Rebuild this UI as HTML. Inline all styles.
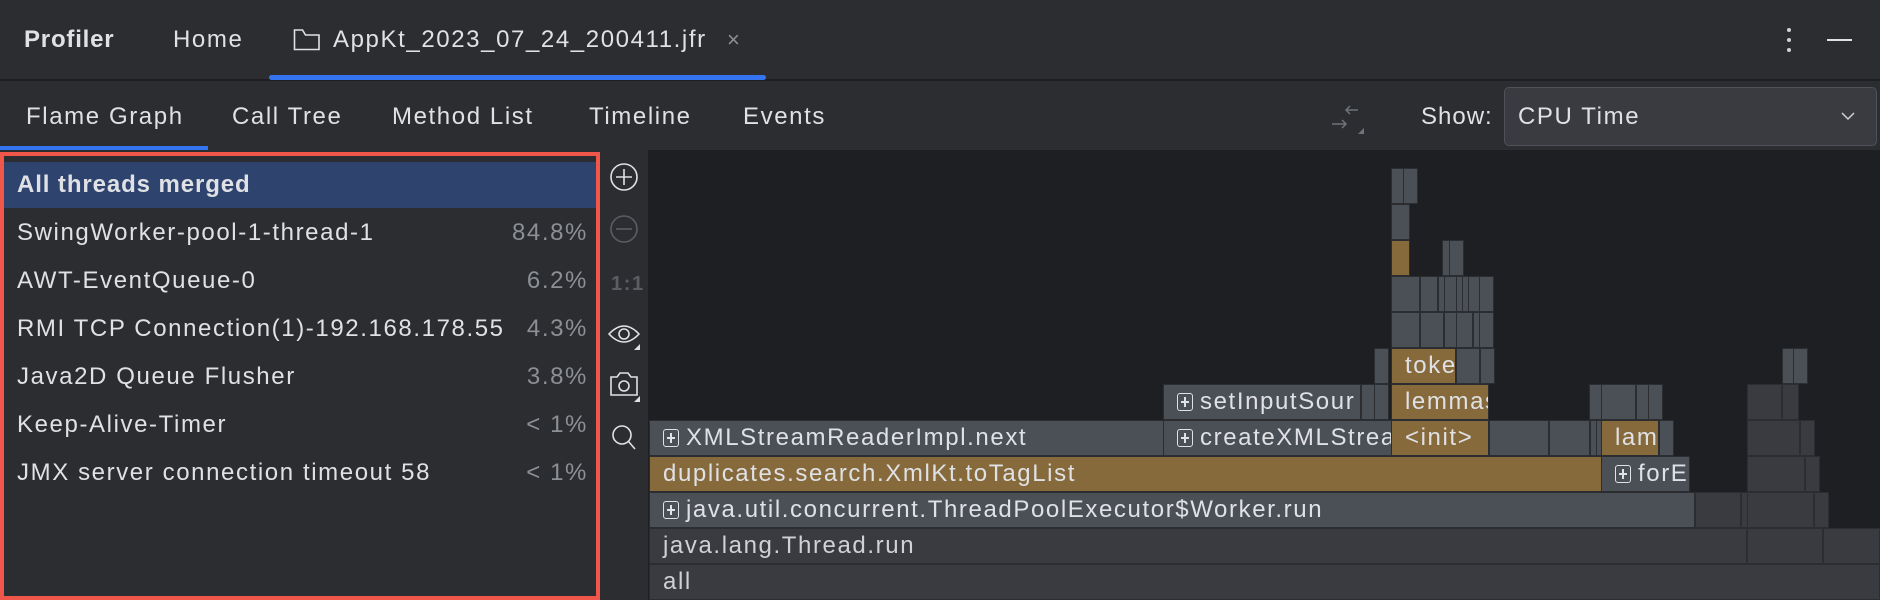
<!DOCTYPE html>
<html><head><meta charset="utf-8"><style>
*{box-sizing:border-box;margin:0;padding:0}
body{width:1880px;height:600px;background:#1e1f22;font-family:"Liberation Sans",sans-serif;color:#dfe1e5;position:relative;overflow:hidden;letter-spacing:1.6px}
.a{position:absolute}
.t{position:absolute;font-size:24px;line-height:26px;white-space:nowrap}
.b{position:absolute;border:1px solid #2b2d30;background:#4b4f56;height:36px;overflow:hidden;font-size:24px;line-height:34px;padding-left:13px;white-space:nowrap;color:#dfe1e5}
.o{background:#876a3b}
.d{background:#393b40}
.p{display:inline-block;width:16px;height:18px;border:1.5px solid #dfe1e5;border-radius:3px;position:relative;vertical-align:-2px;margin-right:7px}
.p:before{content:"";position:absolute;left:3px;right:3px;top:7px;height:1.5px;background:#dfe1e5}
.p:after{content:"";position:absolute;top:3px;bottom:3px;left:6px;width:1.5px;background:#dfe1e5}
.row{position:absolute;left:4px;width:590px;height:48px;font-size:24px;line-height:48px;padding-left:13px}
.row span{position:absolute;right:6px;color:#8c8f94}
</style></head><body>
<div class="a" style="left:0;top:0;width:1880px;height:80px;background:#2b2d30"></div>
<div class="a" style="left:0;top:79px;width:1880px;height:2px;background:#1e1f22"></div>
<div class="t" style="left:24px;top:27px;font-weight:bold;letter-spacing:0.8px">Profiler</div>
<div class="t" style="left:173px;top:27px">Home</div>
<svg class="a" style="left:293px;top:28px" width="28" height="24" viewBox="0 0 28 24"><path d="M1.5 3 V21.5 H26 V7 H12.5 L9.5 2 H1.5 Z" fill="none" stroke="#dfe1e5" stroke-width="1.6"/></svg>
<div class="t" style="left:333px;top:27px">AppKt_2023_07_24_200411.jfr</div>
<div class="t" style="left:727px;top:27px;color:#8c8f94;font-size:22px">×</div>
<div class="a" style="left:269px;top:75px;width:497px;height:5px;background:#3574f0;border-radius:3px"></div>
<div class="a" style="left:1787px;top:28px;width:4px;height:4px;border-radius:2px;background:#cfd1d5;box-shadow:0 10px 0 #cfd1d5,0 20px 0 #cfd1d5"></div>
<div class="a" style="left:1827px;top:39px;width:25px;height:2px;background:#dfe1e5"></div>

<div class="a" style="left:0;top:81px;width:1880px;height:69px;background:#2b2d30"></div>
<div class="t" style="left:26px;top:104px">Flame Graph</div>
<div class="t" style="left:232px;top:104px">Call Tree</div>
<div class="t" style="left:392px;top:104px">Method List</div>
<div class="t" style="left:589px;top:104px">Timeline</div>
<div class="t" style="left:743px;top:104px">Events</div>
<div class="a" style="left:0;top:146px;width:208px;height:4px;background:#3574f0"></div>
<svg class="a" style="left:1330px;top:100px" width="40" height="36" viewBox="0 0 40 36"><g stroke="#6f737a" stroke-width="1.5" fill="none"><path d="M28 10 H16 M20 6 L16 10 L20 14"/><path d="M2 24 H16 M12 20 L16 24 L12 28"/></g><path d="M34 28 L34 34 L28 34 Z" fill="#6f737a"/></svg>
<div class="t" style="left:1421px;top:104px;letter-spacing:1px">Show:</div>
<div class="a" style="left:1504px;top:87px;width:373px;height:59px;background:#393b40;border:1.5px solid #4e5157;border-radius:5px"></div>
<div class="t" style="left:1518px;top:104px">CPU Time</div>
<svg class="a" style="left:1840px;top:110px" width="16" height="12" viewBox="0 0 16 12"><path d="M2 3 L8 9 L14 3" fill="none" stroke="#cfd1d5" stroke-width="1.5"/></svg>

<div class="a" style="left:0;top:150px;width:600px;height:450px;background:#2b2d30"></div>
<div class="a" style="left:600px;top:150px;width:48px;height:450px;background:#2b2d30"></div>
<div class="a" style="left:4px;top:162px;width:592px;height:46px;background:#2e436e"></div>
<div class="row" style="top:161px;font-weight:bold;letter-spacing:0.9px">All threads merged</div>
<div class="row" style="top:209px">SwingWorker-pool-1-thread-1<span>84.8%</span></div>
<div class="row" style="top:257px">AWT-EventQueue-0<span>6.2%</span></div>
<div class="row" style="top:305px">RMI TCP Connection(1)-192.168.178.55<span>4.3%</span></div>
<div class="row" style="top:353px">Java2D Queue Flusher<span>3.8%</span></div>
<div class="row" style="top:401px">Keep-Alive-Timer<span>&lt; 1%</span></div>
<div class="row" style="top:449px">JMX server connection timeout 58<span>&lt; 1%</span></div>
<div class="a" style="left:0;top:152px;width:600px;height:448px;border:4px solid #f0564a"></div>

<svg class="a" style="left:600px;top:150px" width="48" height="310" viewBox="0 0 48 310"><g fill="none" stroke-width="1.6">
<g stroke="#dfe1e5"><circle cx="24" cy="27" r="13"/><path d="M24 19 V35 M16 27 H32"/></g>
<g stroke="#5a5d63"><circle cx="24" cy="79" r="13"/><path d="M16 79 H32"/></g>
<g stroke="#dfe1e5"><path d="M9 184 Q24 168 39 184 Q24 200 9 184 Z"/><circle cx="24" cy="184" r="5"/>
<path d="M11 227 H17 L20 223 H28 L31 227 H37 V245 H11 Z"/><circle cx="24" cy="236" r="5"/>
<circle cx="22" cy="285" r="9"/><path d="M28.5 291.5 L35 299"/></g></g>
<text x="11" y="140" font-family="Liberation Sans" font-size="20" font-weight="bold" fill="#5a5d63">1:1</text>
<path d="M40 194 V200 H34 Z M40 246 V252 H34 Z" fill="#dfe1e5"/></svg>

<div class="b d" style="left:649px;top:564px;width:1231px;color:#cfd1d5">all</div>
<div class="b d" style="left:649px;top:528px;width:1098px;color:#cfd1d5">java.lang.Thread.run</div>
<div class="b d" style="left:1747px;top:528px;width:76px"></div>
<div class="b d" style="left:1823px;top:528px;width:57px"></div>
<div class="b" style="left:649px;top:492px;width:1046px"><i class="p"></i>java.util.concurrent.ThreadPoolExecutor$Worker.run</div>
<div class="b d" style="left:1695px;top:492px;width:46px"></div>
<div class="b d" style="left:1741px;top:492px;width:6px"></div>
<div class="b d" style="left:1747px;top:492px;width:67px"></div>
<div class="b d" style="left:1814px;top:492px;width:4px"></div>
<div class="b o" style="left:649px;top:456px;width:953px">duplicates.search.XmlKt.toTagList</div>
<div class="b" style="left:1601px;top:456px;width:89px"><i class="p"></i>forE</div>
<div class="b d" style="left:1747px;top:456px;width:58px"></div>
<div class="b d" style="left:1805px;top:456px;width:6px"></div>
<div class="b" style="left:649px;top:420px;width:515px"><i class="p"></i>XMLStreamReaderImpl.next</div>
<div class="b" style="left:1163px;top:420px;width:229px"><i class="p"></i>createXMLStrea</div>
<div class="b o" style="left:1391px;top:420px;width:98px">&lt;init&gt;</div>
<div class="b" style="left:1489px;top:420px;width:60px"></div>
<div class="b" style="left:1549px;top:420px;width:41px"></div>
<div class="b" style="left:1590px;top:420px;width:6px"></div>
<div class="b" style="left:1596px;top:420px;width:6px"></div>
<div class="b o" style="left:1601px;top:420px;width:58px">lam</div>
<div class="b" style="left:1659px;top:420px;width:6px"></div>
<div class="b d" style="left:1747px;top:420px;width:53px"></div>
<div class="b d" style="left:1800px;top:420px;width:6px"></div>
<div class="b" style="left:1163px;top:384px;width:198px"><i class="p"></i>setInputSour</div>
<div class="b" style="left:1361px;top:384px;width:14px"></div>
<div class="b" style="left:1374px;top:384px;width:12px"></div>
<div class="b o" style="left:1391px;top:384px;width:98px">lemmas</div>
<div class="b" style="left:1589px;top:384px;width:7px"></div>
<div class="b" style="left:1601px;top:384px;width:35px"></div>
<div class="b" style="left:1636px;top:384px;width:12px"></div>
<div class="b" style="left:1648px;top:384px;width:11px"></div>
<div class="b d" style="left:1747px;top:384px;width:35px"></div>
<div class="b d" style="left:1782px;top:384px;width:17px"></div>
<div class="b" style="left:1374px;top:348px;width:12px"></div>
<div class="b o" style="left:1391px;top:348px;width:65px">toke</div>
<div class="b" style="left:1456px;top:348px;width:24px"></div>
<div class="b" style="left:1480px;top:348px;width:9px"></div>
<div class="b" style="left:1782px;top:348px;width:12px"></div>
<div class="b" style="left:1793px;top:348px;width:6px"></div>
<div class="b" style="left:1391px;top:312px;width:29px"></div>
<div class="b" style="left:1420px;top:312px;width:24px"></div>
<div class="b" style="left:1444px;top:312px;width:12px"></div>
<div class="b" style="left:1456px;top:312px;width:17px"></div>
<div class="b" style="left:1473px;top:312px;width:7px"></div>
<div class="b" style="left:1479px;top:312px;width:10px"></div>
<div class="b" style="left:1391px;top:276px;width:29px"></div>
<div class="b" style="left:1420px;top:276px;width:18px"></div>
<div class="b" style="left:1438px;top:276px;width:7px"></div>
<div class="b" style="left:1444px;top:276px;width:12px"></div>
<div class="b" style="left:1456px;top:276px;width:6px"></div>
<div class="b" style="left:1462px;top:276px;width:6px"></div>
<div class="b" style="left:1468px;top:276px;width:6px"></div>
<div class="b" style="left:1479px;top:276px;width:5px"></div>
<div class="b o" style="left:1391px;top:240px;width:19px"></div>
<div class="b" style="left:1442px;top:240px;width:8px"></div>
<div class="b" style="left:1449px;top:240px;width:7px"></div>
<div class="b" style="left:1391px;top:204px;width:19px"></div>
<div class="b" style="left:1391px;top:168px;width:13px"></div>
<div class="b" style="left:1403px;top:168px;width:7px"></div>
</body></html>
